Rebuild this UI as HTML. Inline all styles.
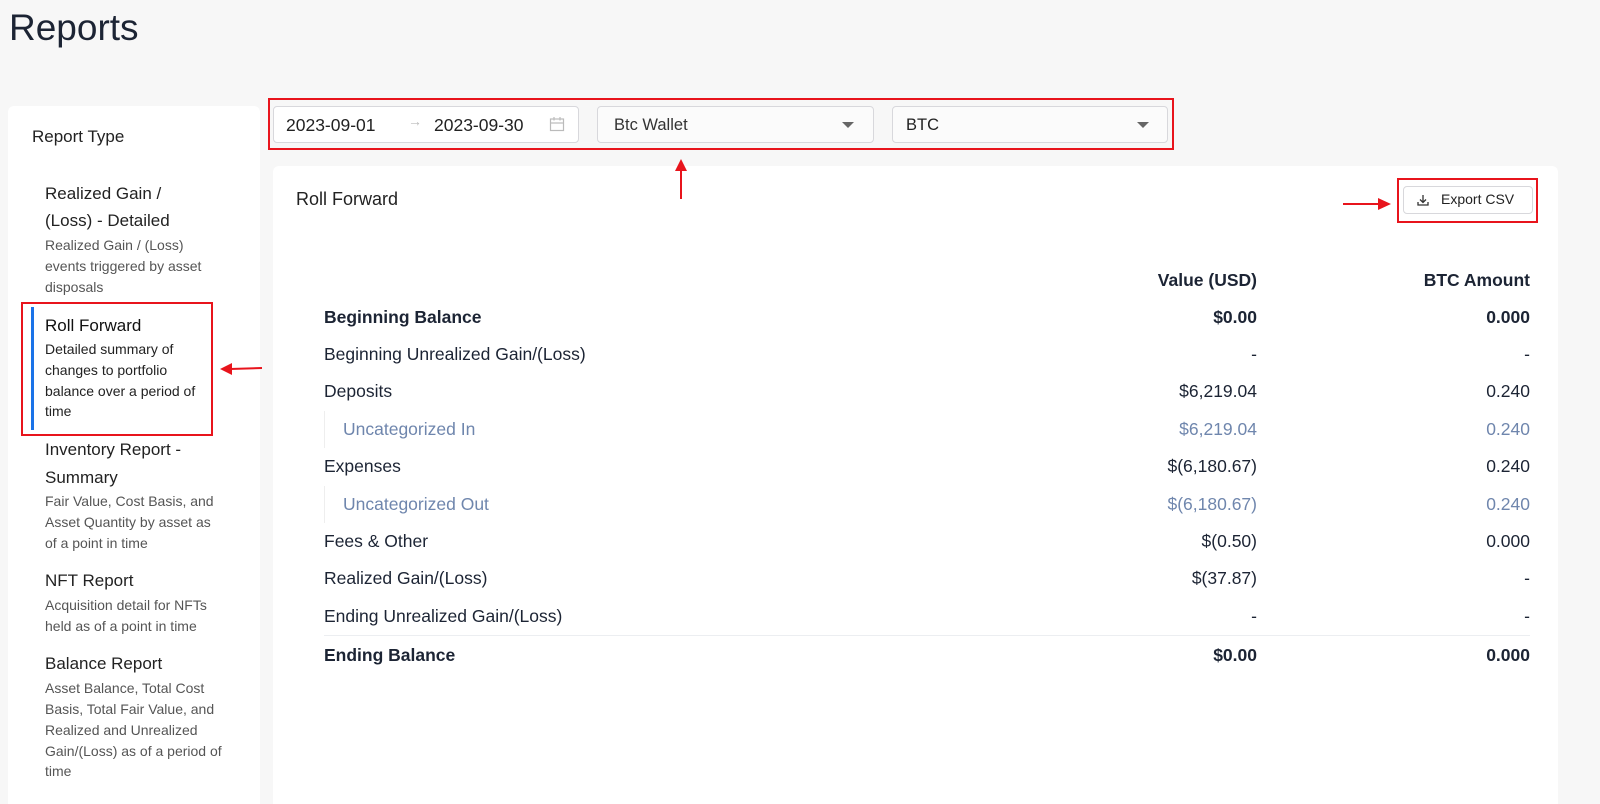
<!DOCTYPE html>
<html><head><meta charset="utf-8"><style>
*{margin:0;padding:0;box-sizing:border-box}
html,body{width:1600px;height:804px;overflow:hidden}
body{background:#f7f7f7;font-family:"Liberation Sans",sans-serif;position:relative;color:#1c2434}
.a{position:absolute;white-space:nowrap}
.card{position:absolute;background:#fff;border-radius:6px}
.t{font-size:17px;color:#222;line-height:20px}
.d{font-size:14px;color:#555;line-height:20px}
.r{font-size:17.5px;line-height:20px;color:#1c2434}
.b{font-weight:bold}
.sub{color:#6f86ad}
.rt{text-align:right}
.red{position:absolute;border:2px solid #e8141c}
.box{position:absolute;border:1px solid #d8d8dc;border-radius:4px;background:#fbfbfb}
.caret{position:absolute;width:0;height:0;border-left:6px solid transparent;border-right:6px solid transparent;border-top:6px solid #666}
</style></head><body>
<div class="a" style="left:9px;top:6px;font-size:37px;line-height:44px;color:#1c2434">Reports</div>

<div class="card" style="left:8px;top:106px;width:252px;height:698px;border-radius:6px 6px 0 0"></div>
<div class="a" style="left:32px;top:127px;font-size:17px;color:#222;line-height:20px">Report Type</div>

<div class="a t" style="left:45px;top:184px">Realized Gain /</div>
<div class="a t" style="left:45px;top:211px">(Loss) - Detailed</div>
<div class="a d" style="left:45px;top:235px">Realized Gain / (Loss)</div>
<div class="a d" style="left:45px;top:256px">events triggered by asset</div>
<div class="a d" style="left:45px;top:277px">disposals</div>

<div style="position:absolute;left:31px;top:307px;width:3px;height:123px;background:#1a73e8"></div>
<div class="a t" style="left:45px;top:316px;color:#111">Roll Forward</div>
<div class="a d" style="left:45px;top:339px;color:#222">Detailed summary of</div>
<div class="a d" style="left:45px;top:360px;color:#222">changes to portfolio</div>
<div class="a d" style="left:45px;top:381px;color:#222">balance over a period of</div>
<div class="a d" style="left:45px;top:401px;color:#222">time</div>
<div class="red" style="left:21px;top:302px;width:192px;height:134px"></div>

<div class="a t" style="left:45px;top:440px">Inventory Report -</div>
<div class="a t" style="left:45px;top:468px">Summary</div>
<div class="a d" style="left:45px;top:491px">Fair Value, Cost Basis, and</div>
<div class="a d" style="left:45px;top:512px">Asset Quantity by asset as</div>
<div class="a d" style="left:45px;top:533px">of a point in time</div>
<div class="a t" style="left:45px;top:571px">NFT Report</div>
<div class="a d" style="left:45px;top:595px">Acquisition detail for NFTs</div>
<div class="a d" style="left:45px;top:616px">held as of a point in time</div>
<div class="a t" style="left:45px;top:654px">Balance Report</div>
<div class="a d" style="left:45px;top:678px">Asset Balance, Total Cost</div>
<div class="a d" style="left:45px;top:699px">Basis, Total Fair Value, and</div>
<div class="a d" style="left:45px;top:720px">Realized and Unrealized</div>
<div class="a d" style="left:45px;top:741px">Gain/(Loss) as of a period of</div>
<div class="a d" style="left:45px;top:761px">time</div>

<svg class="a" style="left:218px;top:362px" width="46" height="14"><line x1="12" y1="7" x2="44" y2="6" stroke="#e8141c" stroke-width="2"/><polygon points="2,7 14,1 14,13" fill="#e8141c"/></svg>

<!-- main card -->
<div class="card" style="left:273px;top:166px;width:1285px;height:638px;border-radius:6px 6px 0 0"></div>

<!-- filters -->
<div class="box" style="left:273px;top:106px;width:306px;height:37px;background:#fff"></div>
<div class="a" style="left:286px;top:115px;font-size:17.5px;line-height:20px;color:#222">2023-09-01</div>
<div class="a" style="left:408px;top:113px;font-size:14px;color:#bbb">→</div>
<div class="a" style="left:434px;top:115px;font-size:17.5px;line-height:20px;color:#222">2023-09-30</div>
<svg class="a" style="left:549px;top:116px" width="16" height="16"><rect x="1.5" y="3" width="13" height="11.5" fill="none" stroke="#bbb" stroke-width="1.2"/><line x1="1.5" y1="7" x2="14.5" y2="7" stroke="#bbb" stroke-width="1.2"/><line x1="5" y1="1" x2="5" y2="4.5" stroke="#bbb" stroke-width="1.2"/><line x1="11" y1="1" x2="11" y2="4.5" stroke="#bbb" stroke-width="1.2"/></svg>

<div class="box" style="left:597px;top:106px;width:277px;height:37px"></div>
<div class="a" style="left:614px;top:115px;font-size:16.5px;line-height:20px;color:#333">Btc Wallet</div>
<div class="caret" style="left:842px;top:122px"></div>
<div class="box" style="left:892px;top:106px;width:276px;height:37px"></div>
<div class="a" style="left:906px;top:115px;font-size:16.5px;line-height:20px;color:#222">BTC</div>
<div class="caret" style="left:1137px;top:122px"></div>
<div class="red" style="left:268px;top:98px;width:906px;height:52px"></div>

<svg class="a" style="left:674px;top:158px" width="14" height="42"><line x1="7" y1="10" x2="7" y2="41" stroke="#e8141c" stroke-width="2"/><polygon points="7,1 1,13 13,13" fill="#e8141c"/></svg>

<div class="a" style="left:296px;top:189px;font-size:18px;line-height:20px;color:#222">Roll Forward</div>

<svg class="a" style="left:1343px;top:197px" width="50" height="14"><line x1="0" y1="7" x2="38" y2="7" stroke="#e8141c" stroke-width="2"/><polygon points="48,7 35,1 35,13" fill="#e8141c"/></svg>
<div class="box" style="left:1403px;top:186px;width:130px;height:28px;background:#fff"></div>
<svg class="a" style="left:1416px;top:193px" width="14" height="14"><path d="M7 2v7M4 6.5l3 3 3-3M2 9v3h10V9" fill="none" stroke="#333" stroke-width="1.3"/></svg>
<div class="a" style="left:1441px;top:190px;font-size:14px;line-height:18px;color:#222">Export CSV</div>
<div class="red" style="left:1397px;top:178px;width:141px;height:45px"></div>

<!-- table -->
<div class="a r b rt" style="left:1000px;width:257px;top:270px">Value (USD)</div>
<div class="a r b rt" style="left:1300px;width:230px;top:270px">BTC Amount</div>

<div class="a r b" style="left:324px;top:307px">Beginning Balance</div>
<div class="a r b rt" style="left:1000px;width:257px;top:307px">$0.00</div>
<div class="a r b rt" style="left:1300px;width:230px;top:307px">0.000</div>

<div class="a r" style="left:324px;top:344px">Beginning Unrealized Gain/(Loss)</div>
<div class="a r rt" style="left:1000px;width:257px;top:344px">-</div>
<div class="a r rt" style="left:1300px;width:230px;top:344px">-</div>

<div class="a r" style="left:324px;top:381px">Deposits</div>
<div class="a r rt" style="left:1000px;width:257px;top:381px">$6,219.04</div>
<div class="a r rt" style="left:1300px;width:230px;top:381px">0.240</div>

<div style="position:absolute;left:324px;top:411px;width:1px;height:37px;background:#eee"></div>
<div class="a r sub" style="left:343px;top:419px">Uncategorized In</div>
<div class="a r sub rt" style="left:1000px;width:257px;top:419px">$6,219.04</div>
<div class="a r sub rt" style="left:1300px;width:230px;top:419px">0.240</div>

<div class="a r" style="left:324px;top:456px">Expenses</div>
<div class="a r rt" style="left:1000px;width:257px;top:456px">$(6,180.67)</div>
<div class="a r rt" style="left:1300px;width:230px;top:456px">0.240</div>

<div style="position:absolute;left:324px;top:486px;width:1px;height:37px;background:#eee"></div>
<div class="a r sub" style="left:343px;top:494px">Uncategorized Out</div>
<div class="a r sub rt" style="left:1000px;width:257px;top:494px">$(6,180.67)</div>
<div class="a r sub rt" style="left:1300px;width:230px;top:494px">0.240</div>

<div class="a r" style="left:324px;top:531px">Fees &amp; Other</div>
<div class="a r rt" style="left:1000px;width:257px;top:531px">$(0.50)</div>
<div class="a r rt" style="left:1300px;width:230px;top:531px">0.000</div>

<div class="a r" style="left:324px;top:568px">Realized Gain/(Loss)</div>
<div class="a r rt" style="left:1000px;width:257px;top:568px">$(37.87)</div>
<div class="a r rt" style="left:1300px;width:230px;top:568px">-</div>

<div class="a r" style="left:324px;top:606px">Ending Unrealized Gain/(Loss)</div>
<div class="a r rt" style="left:1000px;width:257px;top:606px">-</div>
<div class="a r rt" style="left:1300px;width:230px;top:606px">-</div>

<div style="position:absolute;left:324px;top:635px;width:1206px;height:1px;background:#eceef1"></div>
<div class="a r b" style="left:324px;top:645px">Ending Balance</div>
<div class="a r b rt" style="left:1000px;width:257px;top:645px">$0.00</div>
<div class="a r b rt" style="left:1300px;width:230px;top:645px">0.000</div>
</body></html>
